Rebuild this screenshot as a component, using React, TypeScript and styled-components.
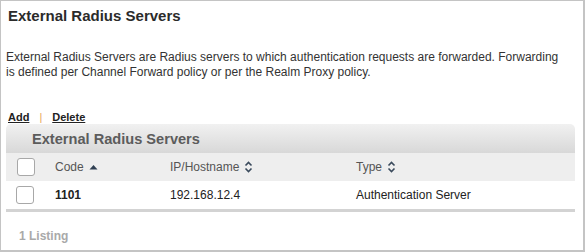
import React from "react";
import styled, {createGlobalStyle} from "styled-components";

interface IServer {
    Code: string;
    Host: string;
    Type: string;
}

const servers: IServer[] = [
    {Code: "1101", Host: "192.168.12.4", Type: "Authentication Server"},
];

const GlobalStyle = createGlobalStyle`
  html, body {
    margin: 0;
    padding: 0;
    background: #fff;
  }
  body {
    font-family: "Liberation Sans", Arial, sans-serif;
    color: #333;
  }
`

function SortUp() {
    return (
        <svg width="9" height="6" viewBox="0 0 9 6">
            <path d="M0.5 5.5 L4.5 1 L8.5 5.5 Z" fill="#2f3f52"/>
        </svg>
    )
}

function SortBoth() {
    return (
        <svg width="9" height="12" viewBox="0 0 9 12">
            <path d="M1.5 4.5 L4.5 1.5 L7.5 4.5" fill="none" stroke="#3a4a5c" strokeWidth="1.6"/>
            <path d="M1.5 7.5 L4.5 10.5 L7.5 7.5" fill="none" stroke="#3a4a5c" strokeWidth="1.6"/>
        </svg>
    )
}

function App() {
    return (
        <>
            <GlobalStyle/>
            <Panel>
                <PageTitle>External Radius Servers</PageTitle>
                <Description>
                    External Radius Servers are Radius servers to which authentication requests are forwarded. Forwarding<br/>
                    is defined per Channel Forward policy or per the Realm Proxy policy.
                </Description>
                <Actions>
                    <ActionLink href="#">Add</ActionLink>
                    <Sep>|</Sep>
                    <ActionLink href="#">Delete</ActionLink>
                </Actions>
                <Table>
                    <TableTitle>External Radius Servers</TableTitle>
                    <HeadRow>
                        <CheckCell><Check/></CheckCell>
                        <HeadCell>Code <SortUp/></HeadCell>
                        <HeadCell>IP/Hostname <SortBoth/></HeadCell>
                        <HeadCell>Type <SortBoth/></HeadCell>
                    </HeadRow>
                    {servers.map(s => (
                        <BodyRow key={s.Code}>
                            <CheckCell $shift={-1}><Check/></CheckCell>
                            <Cell $bold>{s.Code}</Cell>
                            <Cell>{s.Host}</Cell>
                            <Cell>{s.Type}</Cell>
                        </BodyRow>
                    ))}
                </Table>
                <Listing>{servers.length} Listing</Listing>
            </Panel>
        </>
    )
}

export default App;

const Panel = styled.div`
  width: 585px;
  height: 252px;
  box-sizing: border-box;
  border: 1px solid #c4c4c4;
  border-right-width: 2px;
  border-bottom-width: 2px;
  padding: 6px 8px 0 5px;
`
const PageTitle = styled.h1`
  margin: 0 0 0 2px;
  font-size: 15px;
  line-height: 18px;
  font-weight: bold;
  color: #2b2b2b;
`
const Description = styled.p`
  margin: 25px 0 0;
  font-size: 12px;
  line-height: 15px;
  color: #333;
  white-space: nowrap;
`
const Actions = styled.div`
  margin: 31px 0 0 2px;
  display: flex;
  align-items: center;
  gap: 10px;
  font-size: 11px;
  line-height: 13px;
`
const ActionLink = styled.a`
  color: #222;
  font-weight: bold;
  text-decoration: underline;
`
const Sep = styled.span`
  color: #e8a45a;
`
const Table = styled.div`
  margin-top: 0;
  border-bottom: 3px solid #d3d3d3;
`
const TableTitle = styled.div`
  height: 29px;
  line-height: 30px;
  padding-left: 26px;
  border-radius: 5px 5px 0 0;
  background: linear-gradient(#f1f1f1, #d8d8d8);
  font-size: 14.6px;
  font-weight: bold;
  color: #5c5c5c;
`
const Row = styled.div`
  display: grid;
  grid-template-columns: 49px 115px 186px 1fr;
  align-items: center;
  height: 28px;
  font-size: 12px;
`
const HeadRow = styled(Row)`
  background: #eeeeee;
`
const BodyRow = styled(Row)`
  background: #fff;
`
const CheckCell = styled.div<{ $shift?: number }>`
  padding-left: ${p => 11 + (p.$shift ?? 0)}px;
  display: flex;
  align-items: center;
`
const Check = styled.span`
  display: inline-block;
  width: 16px;
  height: 16px;
  border: 1px solid #a8a8a8;
  border-radius: 3px;
  background: #fff;
`
const HeadCell = styled.div`
  display: flex;
  align-items: center;
  gap: 5px;
  color: #555;
`
const Cell = styled.div<{ $bold?: boolean }>`
  color: #222;
  font-weight: ${p => (p.$bold ? "bold" : "normal")};
`
const Listing = styled.div`
  margin: 17px 0 0 13px;
  font-size: 12px;
  font-weight: bold;
  color: #a9a9a9;
`
